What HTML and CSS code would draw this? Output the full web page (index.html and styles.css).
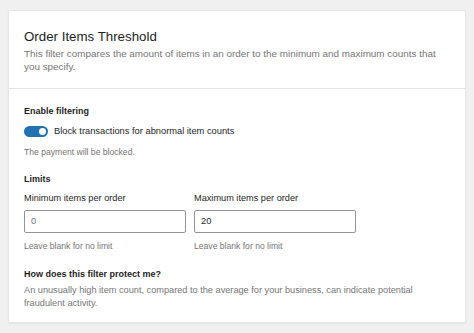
FILE: index.html
```html
<!DOCTYPE html>
<html>
<head>
<meta charset="utf-8">
<link rel="stylesheet" href="styles.css">
</head>
<body>
<div class="card">
  <div class="card-header">
    <h1 class="title">Order Items Threshold</h1>
    <p class="desc">This filter compares the amount of items in an order to the minimum and maximum counts that you specify.</p>
  </div>
  <div class="card-body">
    <h2 class="heading">Enable filtering</h2>
    <label class="toggle-row">
      <span class="toggle"><span class="knob"></span></span>
      <span class="toggle-label">Block transactions for abnormal item counts</span>
    </label>
    <p class="help help-toggle">The payment will be blocked.</p>

    <h2 class="heading heading-limits">Limits</h2>
    <div class="fields">
      <div class="field">
        <div class="label">Minimum items per order</div>
        <div class="input placeholder">0</div>
        <p class="help help-field">Leave blank for no limit</p>
      </div>
      <div class="field">
        <div class="label">Maximum items per order</div>
        <div class="input">20</div>
        <p class="help help-field">Leave blank for no limit</p>
      </div>
    </div>

    <h2 class="heading heading-protect">How does this filter protect me?</h2>
    <p class="desc desc-protect">An unusually high item count, compared to the average for your business, can indicate potential fraudulent activity.</p>
  </div>
</div>
</body>
</html>
```
FILE: styles.css
```css
html, body {
  margin: 0;
  padding: 0;
}
body {
  background: #f0f0f1;
  font-family: "Liberation Sans", Arial, sans-serif;
  color: #1e1e1e;
  padding: 10px 8px 11px 8px;
  height: 333px;
  box-sizing: border-box;
}
.card {
  background: #fff;
  border: 1px solid #e6e6e8;
  border-radius: 2px;
  box-shadow: 0 1px 2px rgba(0,0,0,0.05);
}
.card-header {
  padding: 16px 15px 15px 15px;
  border-bottom: 1px solid #e4e4e6;
}
.title {
  margin: 0;
  font-size: 13.3px;
  font-weight: 400;
  line-height: 19px;
  color: #1e1e1e;
}
.desc {
  margin: 1px 0 0 0;
  font-size: 9.9px;
  line-height: 13px;
  color: #757575;
}
.card-body {
  padding: 15px 15px 12px 15px;
}
.heading {
  margin: 0;
  font-size: 9px;
  font-weight: 700;
  line-height: 14px;
  color: #1e1e1e;
}
.toggle-row {
  display: flex;
  align-items: center;
  gap: 6px;
  margin-top: 6px;
  height: 14px;
}
.toggle {
  width: 24px;
  height: 11px;
  border-radius: 6px;
  background: #2271b1;
  position: relative;
  flex: none;
}
.knob {
  position: absolute;
  right: 2px;
  top: 2px;
  width: 7px;
  height: 7px;
  border-radius: 50%;
  background: #fff;
}
.toggle-label {
  font-size: 9.3px;
  color: #1e1e1e;
  line-height: 14px;
}
.help {
  margin: 0;
  font-size: 8.6px;
  line-height: 13px;
  color: #757575;
}
.help-toggle {
  margin-top: 7.5px;
}
.heading-limits {
  margin-top: 13.5px;
}
.fields {
  display: grid;
  grid-template-columns: 162px 162px;
  gap: 8px;
  margin-top: 5px;
}
.label {
  font-size: 9.2px;
  line-height: 14px;
  color: #1e1e1e;
}
.input {
  margin-top: 5px;
  height: 23px;
  box-sizing: border-box;
  border: 1px solid #949494;
  border-radius: 2px;
  padding: 0 6px;
  font-size: 9.3px;
  line-height: 21px;
  color: #1e1e1e;
}
.input.placeholder {
  color: #757575;
}
.help-field {
  margin-top: 6.5px;
}
.heading-protect {
  margin-top: 14.5px;
}
.desc-protect {
  margin-top: 2.5px;
  font-size: 9.2px;
}
```
